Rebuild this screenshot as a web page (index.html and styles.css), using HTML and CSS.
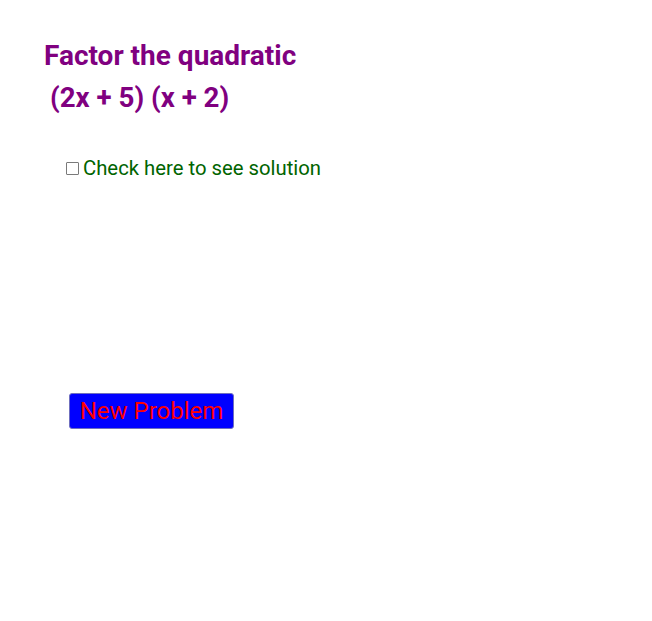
FILE: index.html
```html
<!DOCTYPE html>
<html>
<head>
<meta charset="utf-8">
<link rel="stylesheet" href="styles.css">
</head>
<body>
<div class="page">
  <div class="title">Factor the quadratic</div>
  <div class="expr">(2x + 5) (x + 2)</div>
  <label class="check"><span class="box"></span><span class="check-text">Check here to see solution</span></label>
  <button class="newbtn">New Problem</button>
</div>
</body>
</html>
```
FILE: styles.css
```css
html, body {
  margin: 0;
  padding: 0;
  background: #ffffff;
}
.page {
  width: 652px;
  height: 621px;
  padding: 38px 0 0 44px;
  box-sizing: border-box;
  font-family: Roboto, "Liberation Sans", sans-serif;
}
.title {
  color: #800080;
  font-weight: bold;
  font-size: 28px;
  line-height: 36px;
}
.expr {
  color: #800080;
  font-weight: bold;
  font-size: 27.7px;
  line-height: 36px;
  margin-top: 6px;
  padding-left: 6px;
}
.check {
  display: flex;
  align-items: center;
  margin-top: 40px;
  margin-left: 22px;
  color: #006400;
  font-size: 20.3px;
  line-height: 24px;
}
.box {
  width: 13px;
  height: 13px;
  border: 1px solid #7a7a7a;
  border-radius: 1px;
  margin-right: 4px;
  box-sizing: border-box;
  background: #fff;
}
.newbtn {
  display: block;
  margin-top: 213px;
  margin-left: 25px;
  width: 165px;
  height: 36px;
  background: #0000ff;
  color: #ff0000;
  border: 1px solid #6f6fbf;
  border-radius: 3px;
  font-family: Roboto, "Liberation Sans", sans-serif;
  font-size: 24px;
  padding: 0;
}
```
